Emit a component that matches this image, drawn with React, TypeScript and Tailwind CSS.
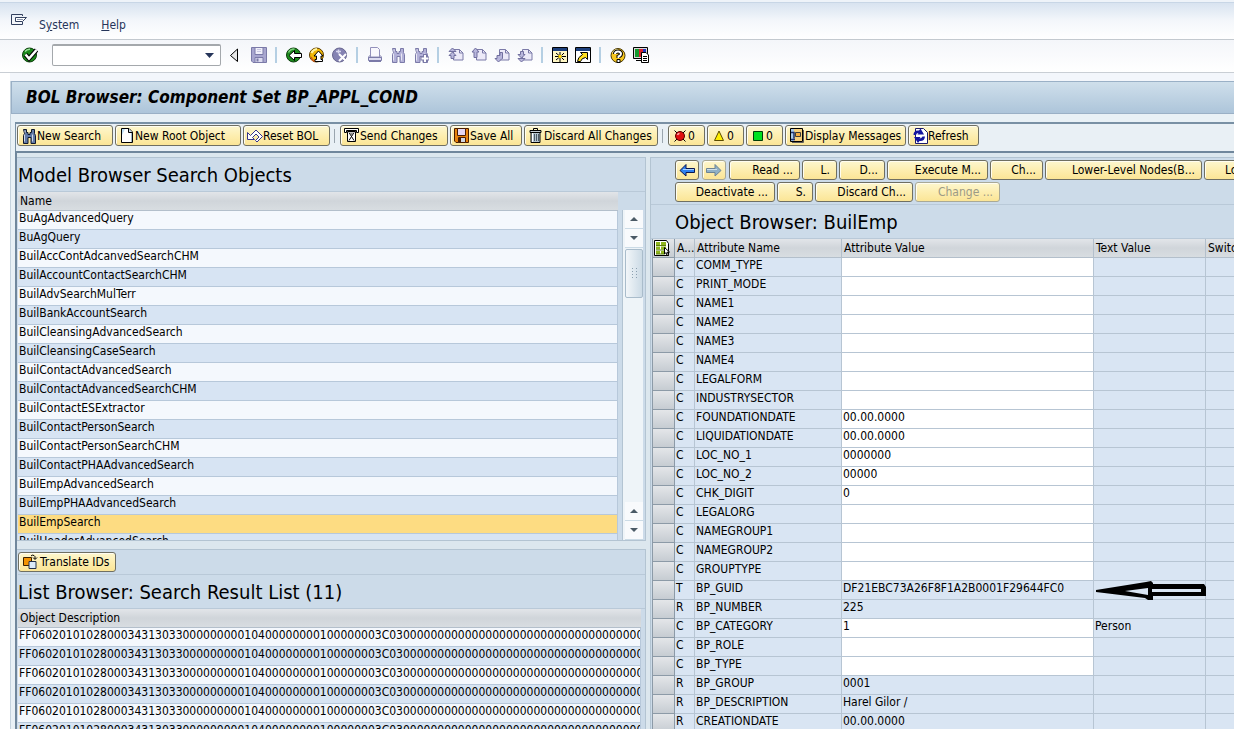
import type { ReactNode } from 'react';

const searchObjects = [
    'BuAgAdvancedQuery',
    'BuAgQuery',
    'BuilAccContAdcanvedSearchCHM',
    'BuilAccountContactSearchCHM',
    'BuilAdvSearchMulTerr',
    'BuilBankAccountSearch',
    'BuilCleansingAdvancedSearch',
    'BuilCleansingCaseSearch',
    'BuilContactAdvancedSearch',
    'BuilContactAdvancedSearchCHM',
    'BuilContactESExtractor',
    'BuilContactPersonSearch',
    'BuilContactPersonSearchCHM',
    'BuilContactPHAAdvancedSearch',
    'BuilEmpAdvancedSearch',
    'BuilEmpPHAAdvancedSearch',
    'BuilEmpSearch',
    'BuilHeaderAdvancedSearch',
];

const resultKey = 'FF060201010280003431303300000000010400000000100000003C03' + '0'.repeat(35);
const results = Array.from({ length: 11 }, () => resultKey);

type Attribute = { kind: 'C' | 'R' | 'T'; name: string; value?: string; text?: string };

const attributes: Attribute[] = [
    { kind: 'C', name: 'COMM_TYPE' },
    { kind: 'C', name: 'PRINT_MODE' },
    { kind: 'C', name: 'NAME1' },
    { kind: 'C', name: 'NAME2' },
    { kind: 'C', name: 'NAME3' },
    { kind: 'C', name: 'NAME4' },
    { kind: 'C', name: 'LEGALFORM' },
    { kind: 'C', name: 'INDUSTRYSECTOR' },
    { kind: 'C', name: 'FOUNDATIONDATE', value: '00.00.0000' },
    { kind: 'C', name: 'LIQUIDATIONDATE', value: '00.00.0000' },
    { kind: 'C', name: 'LOC_NO_1', value: '0000000' },
    { kind: 'C', name: 'LOC_NO_2', value: '00000' },
    { kind: 'C', name: 'CHK_DIGIT', value: '0' },
    { kind: 'C', name: 'LEGALORG' },
    { kind: 'C', name: 'NAMEGROUP1' },
    { kind: 'C', name: 'NAMEGROUP2' },
    { kind: 'C', name: 'GROUPTYPE' },
    { kind: 'T', name: 'BP_GUID', value: 'DF21EBC73A26F8F1A2B0001F29644FC0' },
    { kind: 'R', name: 'BP_NUMBER', value: '225' },
    { kind: 'C', name: 'BP_CATEGORY', value: '1', text: 'Person' },
    { kind: 'C', name: 'BP_ROLE' },
    { kind: 'C', name: 'BP_TYPE' },
    { kind: 'R', name: 'BP_GROUP', value: '0001' },
    { kind: 'R', name: 'BP_DESCRIPTION', value: 'Harel Gilor /' },
    { kind: 'R', name: 'CREATIONDATE', value: '00.00.0000' },
];

/* ---------- icons ---------- */

const Icon = ({ children }: { children: ReactNode }) => (
    <svg className="block size-4 shrink-0" viewBox="0 0 16 16" fill="none" aria-hidden="true">
        {children}
    </svg>
);

const MenuIcon = () => (
    <Icon>
        <path d="M11.5 3V1.5H.5v10h11V9" stroke="#33415f" />
        <path d="M4.5 4.500h11l-4 4h-7z" fill="#fff" stroke="#33415f" />
        <path d="M6 6.500h6" stroke="#8a96ac" />
    </Icon>
);

const CheckIcon = () => (
    <Icon>
        <circle cx="7.5" cy="8" r="7" fill="#1c8a1c" stroke="#0b3d0b" />
        <path d="M3 4.5Q5 2 8 2.2" stroke="#9be09b" strokeWidth="1.5" />
        <path d="M3.5 7.5L7 11.5L14.5 3" stroke="#000" strokeWidth="4.5" />
        <path d="M3.5 7.5L7 11.5L14.5 3" stroke="#fff" strokeWidth="2.5" />
    </Icon>
);

const SaveMutedIcon = () => (
    <Icon>
        <path d="M.5.5h15v15H2L.5 14z" fill="#a8a6cf" stroke="#7b7aa8" />
        <path d="M4 .5h8v7H4z" fill="#f0effa" stroke="#7b7aa8" />
        <path d="M6 2.5h4M6 4.5h4" stroke="#c9c8e2" />
        <path d="M4 10.5h8v5H4z" fill="#dddcf0" stroke="#7b7aa8" />
        <path d="M5.5 11.5h2v3h-2z" fill="#7b7aa8" />
    </Icon>
);

const BackIcon = () => (
    <Icon>
        <circle cx="7.5" cy="8" r="7" fill="#1c8a1c" stroke="#0b3d0b" />
        <path d="M2.500 5.500Q4 2 8.500 2" stroke="#7fd07f" strokeWidth="1.5" />
        <path d="M3 8.5L8.500 3.500V6.500H15.500V10.500H8.500V13.500z" fill="#fff" stroke="#000" />
    </Icon>
);

const ExitIcon = () => (
    <Icon>
        <circle cx="7.5" cy="8" r="7" fill="#f2b705" stroke="#5c3d00" />
        <path d="M2.500 6Q4 2.500 8 2" stroke="#fff3a0" strokeWidth="2" />
        <path d="M2 10Q3 13.500 6 14.500" stroke="#d2601a" strokeWidth="1.5" />
        <path d="M9.500 4L14 9H12V12.500H13.500V14.500H6V12.500H7.500V9H5z" fill="#fff" stroke="#000" />
    </Icon>
);

const CancelIcon = () => (
    <Icon>
        <circle cx="7.5" cy="8" r="7" fill="#8583b3" stroke="#67658f" />
        <path d="M4 4.500h5M6.500 2.500v4" stroke="#d9d8ee" strokeWidth="1.5" />
        <path d="M7 7l7 7M14 7l-7 7" stroke="#fff" strokeWidth="2" />
    </Icon>
);

const PrintIcon = () => (
    <Icon>
        <path d="M3.5 10V.5h7l2 2V10z" fill="#f8f7fd" stroke="#9290bb" />
        <path d="M2.5 8.500L1.500 10.500H14.500L13.500 8.500" stroke="#7b7aa8" />
        <path d="M1.5 10.500h13v3h-13z" fill="#dcdbf0" stroke="#7b7aa8" />
        <path d="M2 14.500h12" stroke="#7b7aa8" />
    </Icon>
);

const Binoculars = ({ fill, line, plus }: { fill: string; line: string; plus?: boolean }) => (
    <Icon>
        <path d="M2.5 1.5h3v3h1.500v2h2v-2h1.500v-3h3v4l1 2v8h-4.500v-6h-3v6h-4.500v-8l1-2z" fill={fill} stroke={line} />
        <path d="M3.5 6.500v7M11.500 6.500v7M4 2.500v2" stroke="#fff" opacity=".7" />
        {plus && <path d="M12 7v9M7.5 11.500h8.500" stroke={line} strokeWidth="4" />}
        {plus && <path d="M12 8v7M8.5 11.500h7" stroke="#fff" strokeWidth="2" />}
    </Icon>
);

const PageIcon = ({ arrow }: { arrow: string }) => (
    <Icon>
        <path d="M5.5 2.5h6l3.500 3.500v7h-9.500z" fill="#eceaf8" stroke="#7b7aa8" />
        <path d="M11.500 2.5v3.500h3.500" stroke="#7b7aa8" />
        <path d={arrow} fill="#b9b7dc" stroke="#716f9f" />
    </Icon>
);

const firstPage = 'M4.500 1L8 4.500H1zM4.500 5L8 8.500H6V11.500H3V8.500H1z';
const prevPage = 'M4.500 1L8 5H6V10.500H3V5H1z';
const nextPage = 'M4.500 15L1 11.500H3V8.500H6V5.500H8.500V11.500H8z';
const lastPage = 'M4.500 15L1 11.500H8zM4.500 11L1 7.500H3.500V4.500H6.500V7.500H8z';

const NewSessionIcon = () => (
    <Icon>
        <path d="M.5.5h15v15H.5z" fill="#fff7c4" stroke="#000" />
        <path d="M1 1h14v3H1z" fill="#1c3f7c" />
        <path d="M8 5v3M8 11v4M3 9.500h4M9.500 9.500H14M4 6l3 2.500M12 6L9.500 8.500M4 13l3-2.500M12 13l-2.500-2.500" stroke="#000" />
        <path d="M6.5 8h3v3h-3z" fill="#ffd800" />
    </Icon>
);

const ShortcutIcon = () => (
    <Icon>
        <path d="M.5.5h15v15H.5z" fill="#fff" stroke="#000" />
        <path d="M1 1h14v3H1z" fill="#1c3f7c" />
        <path d="M5.500 5.500H12.500V12.500L10.500 10.500Q6.500 11 5.500 14.500H2.500Q2.500 10.500 7.500 7.500z" fill="#ffdf20" stroke="#000" />
    </Icon>
);

const HelpIcon = () => (
    <Icon>
        <circle cx="8" cy="8.5" r="7" fill="#f7c61e" stroke="#4b3a08" />
        <path d="M3 6Q5 3 8 3" stroke="#fff6b5" strokeWidth="2" />
        <path d="M5 7Q5 4.500 8 4.500T11 7Q11 8.500 8.500 9.500V11" stroke="#000" strokeWidth="4" />
        <path d="M5 7Q5 4.500 8 4.500T11 7Q11 8.500 8.500 9.500V11" stroke="#fff" strokeWidth="2" />
        <path d="M7 12.500h3v3H7z" fill="#fff" stroke="#000" />
    </Icon>
);

const LayoutIcon = () => (
    <Icon>
        <path d="M.5.5h14v11H.5zM3 13.500h6" fill="#d9d9d9" stroke="#000" />
        <path d="M2 2h4v8H2z" fill="#149a2e" />
        <path d="M6 2h4v8H6z" fill="#d8202a" />
        <path d="M10 2h3v8h-3z" fill="#2036c0" />
        <path d="M8.500 5.500h4.500l2.500 2.500v7.500h-7z" fill="#fff" stroke="#000" />
        <path d="M10 9.500h4M10 11.500h4M10 13.500h4" stroke="#000" />
    </Icon>
);

const DocumentIcon = () => (
    <Icon>
        <path d="M2.5.5h7.500l3.500 3.500v10.500h-11z" fill="#fff" stroke="#000" />
        <path d="M3 1h3L3 7z" fill="#bfe0f5" />
        <path d="M9.500.5v4h4" fill="#c5d8e8" stroke="#000" />
        <path d="M12.500 5v9" stroke="#9db4c8" />
    </Icon>
);

const ResetIcon = () => (
    <Icon>
        <path d="M.5 4.500V11.500H7.500L5.500 9.500L9 6L12 9L8.500 12.500L10 14L15.500 8.500L9 2L3.500 7.500z" fill="#fff" stroke="#33338c" />
    </Icon>
);

const SendIcon = () => (
    <Icon>
        <path d="M.5.5h14v4h-2v-2h-10v2h-2z" fill="#fff" stroke="#000" />
        <path d="M3.5 3.500v10h8v-10z" fill="#fff" stroke="#000" />
        <path d="M5 4.500l5 8M10 4.500l-5 8" stroke="#000" />
        <path d="M5.5 4.500h4L7.500 7.500z" fill="#8a8a8a" />
    </Icon>
);

const FloppyIcon = () => (
    <Icon>
        <path d="M.5.5h14v14H2L.5 13z" fill="#e8820c" stroke="#4a1c00" />
        <path d="M3.500.5h8v7h-8z" fill="#e5d6f2" stroke="#4a1c00" />
        <path d="M4.500 9.500h7v5h-7z" fill="#cfd6e2" stroke="#4a1c00" />
        <path d="M5 10h2v4H5z" fill="#4a1c00" />
    </Icon>
);

const TrashIcon = () => (
    <Icon>
        <path d="M5.500 2V.5h4V2" stroke="#000" />
        <path d="M2 2.500h11v2H2z" fill="#c5ced6" stroke="#000" />
        <path d="M3 4.500h9v10H3z" fill="#b4c4d0" stroke="#000" />
        <path d="M6.500 6v7M8.500 6v7M10.500 6v7" stroke="#4c5a66" />
        <path d="M4.500 5v9" stroke="#fff" />
    </Icon>
);

const RedLight = () => (
    <Icon>
        <path d="M2.500 2.500l3 3M13.500 2.500l-3 3M2.500 13.500l3-3M13.500 13.500l-3-3" stroke="#000" />
        <circle cx="8" cy="8" r="4.5" fill="#e01010" stroke="#5a0000" />
        <path d="M5.500 7Q6 5.500 7.500 5.500" stroke="#ffb0b0" strokeWidth="1.5" />
    </Icon>
);

const YellowLight = () => (
    <Icon>
        <path d="M8 3L12.500 12.500H3.500z" fill="#ffee00" stroke="#5a4a00" />
    </Icon>
);

const GreenLight = () => (
    <Icon>
        <path d="M3.5 3.5h9v9h-9z" fill="#00e020" stroke="#003c08" />
    </Icon>
);

const MessagesIcon = () => (
    <Icon>
        <path d="M1.500.5h12v13h-12z" fill="#f6cf7c" stroke="#000" />
        <path d="M2 1h3v12H2z" fill="#a9c8ec" />
        <path d="M6.500 4.500h5v4h-5z" fill="#f3a93f" stroke="#3b3b3b" />
        <path d="M2 4.500h3v6M2 11.500h4" stroke="#1d2f6e" strokeWidth="1.5" />
        <path d="M3 14.500h11.500V2" stroke="#5c5c5c" />
    </Icon>
);

const RefreshIcon = () => (
    <Icon>
        <path d="M3.5.5h8l4 4v11h-12z" fill="#fff" stroke="#1a1a6a" />
        <path d="M1.500 7Q1.500 2 7 2.500L8.500.5L12 6.500H5.500L6.500 5Q4.500 5 4 7z" fill="#1414a0" />
        <path d="M13 8.500Q12.500 13.500 7.500 13L6 15L2 9H8.500L7.500 10.500Q9.500 10.500 10.500 8.500z" fill="#1414a0" />
    </Icon>
);

const ArrowIcon = ({ right }: { right?: boolean }) => (
    <Icon>
        <path
            d={right ? 'M.5 6.500H9V2.500L15 8.500L9 14V10.500H.5z' : 'M15.500 6.500H7V2.500L1 8.500L7 14V10.500H15.500z'}
            fill={right ? '#8fb0c6' : '#2f80f0'}
            stroke={right ? '#6d8494' : '#0b1650'}
        />
        <path d={right ? 'M1 7.500h10' : 'M4 7.500h11'} stroke={right ? '#cfe0ea' : '#a9d4ff'} />
    </Icon>
);

const TranslateIcon = () => (
    <Icon>
        <path d="M1.500 3.500h8v8h-8z" fill="#f39200" stroke="#3a1f00" />
        <path d="M7 7.500h7v7H7z" fill="#dcebf8" stroke="#22304a" />
        <path d="M9 2Q10 .5 12 1.500Q13.500 2 13 5M11 3.500L13 5.500L15 3.500" stroke="#000" />
    </Icon>
);

const ConfigIcon = () => (
    <Icon>
        <path d="M.5.5h12l2 3v12H.5z" fill="#fff" stroke="#000" />
        <path d="M2 2h4v3H2zM7 2h5v3H7zM2 6.500h4v3H2zM7 6.500h5v3H7zM2 11h4v3H2zM7 11h4v3H7z" fill="#8fb51c" />
        <path d="M2 5.500h10M2 10h9M2 14h9" stroke="#5c7d0c" />
        <path d="M10.500 7.500V14L12 12.500L13 15.500H14.500L13.500 12H15.500z" fill="#fff" stroke="#000" />
    </Icon>
);

/* ---------- small parts ---------- */

const BarDivider = () => <span className="ml-px mr-0.5 h-4 w-0.5 bg-[#b5cfe3]" />;

const ToolButton = ({ label, children }: { label: string; children: ReactNode }) => (
    <button type="button" aria-label={label} className="flex size-4 items-center justify-center">
        {children}
    </button>
);

const buttonLook =
    'flex shrink-0 items-center overflow-hidden whitespace-nowrap rounded-[3px] border border-[#6f6f62] bg-linear-to-b from-[#fdf7cf] via-[#fdeeb0] to-[#fbe596] shadow-[inset_1px_1px_0_#fffdf0]';

const AppButton = ({ width, icon, children }: { width: string; icon?: ReactNode; children: ReactNode }) => (
    <button type="button" className={`${buttonLook} h-[21px] pl-[3px] ${width}`}>
        {icon}
        <span>{children}</span>
    </button>
);

const TextButton = ({ width, disabled, children }: { width: string; disabled?: boolean; children: ReactNode }) => (
    <button
        type="button"
        disabled={disabled}
        className={`${buttonLook} h-5 justify-end pr-1.5 disabled:border-[#a9a996] disabled:text-[#9c9a86] ${width}`}
    >
        {children}
    </button>
);

const GroupDivider = () => <span className="ml-0.5 mr-[3px] h-3.5 w-px bg-[#9aa5ae]" />;

const ScrollArrow = ({ down }: { down?: boolean }) => (
    <button
        type="button"
        aria-label={down ? 'Scroll down' : 'Scroll up'}
        className="flex h-[19px] w-full shrink-0 items-center justify-center border-b border-[#cbdbe6] bg-[#f8fafc]"
    >
        <svg className="h-1 w-2" viewBox="0 0 8 4" aria-hidden="true">
            <path d={down ? 'M0 0h8L4 4z' : 'M0 4h8L4 0z'} fill="#4a5a66" />
        </svg>
    </button>
);

const panel = 'flex min-h-0 min-w-0 flex-col overflow-hidden border-t border-[#b3c4d2] bg-[#ccdbe9]';
const headCell =
    'border-b border-[#b3bfcb] bg-linear-to-b from-[#e2e5e9] via-[#d0d5da] to-[#d8dde1] px-0.5 py-0 text-left font-normal';
const heading = 'shrink-0 border-b border-[#b9c9d8] pt-0.5 text-[20px] leading-[31px]';
const listCell = 'h-[19px] overflow-hidden whitespace-nowrap border-b border-r border-[#b7c8da] p-0 pb-1 pl-px leading-[14px]';

/* ---------- bars ---------- */

const MenuBar = () => (
    <nav className="flex h-[37px] shrink-0 items-center border-b border-[#c3c9cf] bg-linear-to-b from-[#d8e3f0] via-[#f4f7fb] to-white pl-[11px] pt-2 text-[#26355a]">
        <button type="button" aria-label="Menu" className="mb-2 mr-3">
            <MenuIcon />
        </button>
        <a href="#system" className="mr-[22px]">
            S<u>y</u>stem
        </a>
        <a href="#help">
            <u>H</u>elp
        </a>
    </nav>
);

const StandardToolbar = () => (
    <div className="flex h-[33px] shrink-0 items-center gap-[7px] border-b border-[#c9ced4] bg-linear-to-b from-[#f4f6fa] to-white pb-0.5 pl-[22px]">
        <ToolButton label="Enter"><CheckIcon /></ToolButton>
        <label className="ml-[7px] flex h-[22px] w-[169px] items-center rounded-xs border border-t-2 border-[#a4a8ac] bg-white pr-1.5">
            <input aria-label="Command" className="min-w-0 flex-1 px-1 outline-none" />
            <svg className="h-[5px] w-[9px]" viewBox="0 0 9 5" aria-hidden="true">
                <path d="M0 0h9L4.5 5z" fill="#26355a" />
            </svg>
        </label>
        <ToolButton label="Collapse">
            <Icon>
                <path d="M9.5 2v12.500L2.5 8.500z" fill="#e8e8e8" stroke="#000" />
            </Icon>
        </ToolButton>
        <ToolButton label="Save"><SaveMutedIcon /></ToolButton>
        <BarDivider />
        <ToolButton label="Back"><BackIcon /></ToolButton>
        <ToolButton label="Exit"><ExitIcon /></ToolButton>
        <ToolButton label="Cancel"><CancelIcon /></ToolButton>
        <BarDivider />
        <ToolButton label="Print"><PrintIcon /></ToolButton>
        <ToolButton label="Find"><Binoculars fill="#b3b1d8" line="#7b7aa8" /></ToolButton>
        <ToolButton label="Find next"><Binoculars fill="#b3b1d8" line="#7b7aa8" plus /></ToolButton>
        <BarDivider />
        <ToolButton label="First page"><PageIcon arrow={firstPage} /></ToolButton>
        <ToolButton label="Previous page"><PageIcon arrow={prevPage} /></ToolButton>
        <ToolButton label="Next page"><PageIcon arrow={nextPage} /></ToolButton>
        <ToolButton label="Last page"><PageIcon arrow={lastPage} /></ToolButton>
        <BarDivider />
        <ToolButton label="New session"><NewSessionIcon /></ToolButton>
        <ToolButton label="Create shortcut"><ShortcutIcon /></ToolButton>
        <BarDivider />
        <ToolButton label="Help"><HelpIcon /></ToolButton>
        <ToolButton label="Customize layout"><LayoutIcon /></ToolButton>
    </div>
);

const ApplicationToolbar = () => (
    <div className="ml-1 flex h-[29px] shrink-0 items-center gap-0.5 border-l border-t-2 border-[#7990a4] bg-[#e9f0f5] pb-1 pl-px">
        <AppButton width="w-24" icon={<Binoculars fill="#5f79a8" line="#10182c" />}>New Search</AppButton>
        <AppButton width="w-[126px]" icon={<DocumentIcon />}>New Root Object</AppButton>
        <AppButton width="w-[87px]" icon={<ResetIcon />}>Reset BOL</AppButton>
        <GroupDivider />
        <AppButton width="w-[108px]" icon={<SendIcon />}>Send Changes</AppButton>
        <AppButton width="w-[72px]" icon={<FloppyIcon />}>Save All</AppButton>
        <AppButton width="w-[134px]" icon={<TrashIcon />}>Discard All Changes</AppButton>
        <GroupDivider />
        <AppButton width="w-[37px]" icon={<RedLight />}>0</AppButton>
        <AppButton width="w-[37px]" icon={<YellowLight />}>0</AppButton>
        <AppButton width="w-[37px]" icon={<GreenLight />}>0</AppButton>
        <AppButton width="w-[121px]" icon={<MessagesIcon />}>Display Messages</AppButton>
        <AppButton width="w-[71px]" icon={<RefreshIcon />}>Refresh</AppButton>
    </div>
);

/* ---------- panels ---------- */

const SearchObjects = () => (
    <section className={`${panel} shrink-0 border-b border-r pl-px`}>
        <h2 className={heading}>Model Browser Search Objects</h2>
        <div className="flex h-[348px] gap-1 pr-0.5">
            <div className="min-w-0 flex-1 overflow-hidden">
                <table className="w-full table-fixed border-separate border-spacing-0">
                    <thead>
                        <tr>
                            <th className={`${headCell} h-[19px]`}>Name</th>
                        </tr>
                    </thead>
                    <tbody>
                        {searchObjects.map((name) => (
                            <tr
                                key={name}
                                className={
                                    name === 'BuilEmpSearch'
                                        ? 'bg-[#fddc82]'
                                        : 'odd:bg-[#f4f8fd] even:bg-[#d7e4f3]'
                                }
                            >
                                <td className={listCell}>{name}</td>
                            </tr>
                        ))}
                    </tbody>
                </table>
            </div>
            <div className="mt-[18px] flex w-[21px] flex-col border-l border-[#b3c4d2] bg-[#eef4f8] pl-0.5">
                <ScrollArrow />
                <ScrollArrow down />
                <div className="flex-1">
                    <div className="mt-px flex h-[49px] items-center justify-center rounded-xs border border-[#a9bccb] bg-linear-to-r from-[#f2f6f9] to-[#ccdbe6]">
                        <svg className="h-[11px] w-[5px]" viewBox="0 0 5 11" aria-hidden="true">
                            <path d="M.5 0v11M4.5 0v11" stroke="#8ba0b0" strokeDasharray="1 2" />
                        </svg>
                    </div>
                </div>
                <ScrollArrow />
                <ScrollArrow down />
            </div>
        </div>
    </section>
);

const ResultList = () => (
    <section className={`${panel} flex-1 border-r pl-px`}>
        <div className="flex h-[25px] shrink-0 items-center border-b border-[#b9c9d8]">
            <button type="button" className={`${buttonLook} h-5 w-[98px] gap-0.5 pl-[3px]`}>
                <TranslateIcon />
                <span>Translate IDs</span>
            </button>
        </div>
        <h2 className={heading}>List Browser: Search Result List (11)</h2>
        <div className="overflow-hidden pr-1">
            <table className="w-full table-fixed border-separate border-spacing-0">
                <thead>
                    <tr>
                        <th className={`${headCell} h-[19px]`}>Object Description</th>
                    </tr>
                </thead>
                <tbody>
                    {results.map((key, i) => (
                        <tr key={i} className="odd:bg-[#f4f8fd] even:bg-[#d7e4f3]">
                            <td className={listCell}>{key}</td>
                        </tr>
                    ))}
                </tbody>
            </table>
        </div>
    </section>
);

const PointerArrow = () => (
    <svg className="absolute left-px top-0 z-10 h-5 w-28" viewBox="0 0 112 20" aria-hidden="true">
        <path
            fillRule="evenodd"
            d="M1 9L51 1L56 0L58 2V3H109L111 6V15H58V19H53L50 17L1 11zM30 10L53 14V7zM57 8V11H106V8z"
        />
    </svg>
);

const cell = 'h-[19px] border-b border-r border-[#b7c5d3] p-0 pb-1 pl-px leading-[14px]';
const selector =
    'border-x border-b border-[#8c9aa7] bg-linear-to-b from-[#e4e6e9] to-[#c6ccd2] p-0';

const ObjectBrowser = () => (
    <section className={`${panel} border-l`}>
        <div className="flex h-[47px] shrink-0 flex-col justify-center gap-0.5 border-b border-[#b9c9d8] pl-6">
            <div className="flex gap-0.5">
                <button type="button" aria-label="Back" className={`${buttonLook} mr-px h-5 w-6 justify-center`}>
                    <ArrowIcon />
                </button>
                <button type="button" aria-label="Forward" disabled className={`${buttonLook} mr-px h-5 w-6 justify-center disabled:border-[#a9a996]`}>
                    <ArrowIcon right />
                </button>
                <TextButton width="w-[71px]">Read ...</TextButton>
                <TextButton width="w-[35px]">L.</TextButton>
                <TextButton width="w-[46px]">D...</TextButton>
                <TextButton width="w-[101px]">Execute M...</TextButton>
                <TextButton width="w-[53px]">Ch...</TextButton>
                <TextButton width="w-[157px]">Lower-Level Nodes(B...</TextButton>
                <button type="button" className={`${buttonLook} h-5 w-[157px] pl-5`}>Lower-Level Nodes</button>
            </div>
            <div className="flex gap-0.5">
                <TextButton width="w-[100px]">Deactivate ...</TextButton>
                <TextButton width="w-9">S.</TextButton>
                <TextButton width="w-[98px]">Discard Ch...</TextButton>
                <TextButton width="w-[85px]" disabled>Change ...</TextButton>
            </div>
        </div>
        <h2 className={`${heading} pl-6`}>Object Browser: BuilEmp</h2>
        <div className="min-h-0 overflow-hidden pl-px">
            <table className="w-[760px] table-fixed border-separate border-spacing-0">
                <colgroup>
                    <col className="w-[23px]" />
                    <col className="w-5" />
                    <col className="w-[147px]" />
                    <col className="w-[252px]" />
                    <col className="w-28" />
                    <col />
                </colgroup>
                <thead>
                    <tr>
                        <th aria-label="Table settings" className={`${selector} h-[19px] pl-px`}><ConfigIcon /></th>
                        <th className={`${headCell} whitespace-nowrap border-r`}>A...</th>
                        <th className={`${headCell} border-r`}>Attribute Name</th>
                        <th className={`${headCell} border-r`}>Attribute Value</th>
                        <th className={`${headCell} border-r`}>Text Value</th>
                        <th className={headCell}>Switch</th>
                    </tr>
                </thead>
                <tbody>
                    {attributes.map(({ kind, name, value, text }) => (
                        <tr key={name} className="bg-[#d9e5f3]">
                            <td className={selector} />
                            <td className={cell}>{kind}</td>
                            <td className={cell}>{name}</td>
                            {kind === 'C' ? (
                                <td className={`${cell} bg-white`}>
                                    <input
                                        aria-label={name}
                                        defaultValue={value}
                                        className="block h-3.5 w-full bg-transparent leading-[14px] outline-none"
                                    />
                                </td>
                            ) : (
                                <td className={cell}>{value}</td>
                            )}
                            <td className={`${cell} relative`}>
                                {text}
                                {name === 'BP_GUID' && <PointerArrow />}
                            </td>
                            <td className={cell} />
                        </tr>
                    ))}
                </tbody>
            </table>
        </div>
    </section>
);

export default function App() {
    return (
        <div className="flex h-screen flex-col overflow-hidden bg-white font-['DejaVu_Sans_Condensed','DejaVu_Sans',sans-serif] text-[12px] leading-4 text-black">
            <div className="h-[3px] shrink-0 border-b border-[#c8d6e6] bg-[#eef3f9]" />
            <MenuBar />
            <StandardToolbar />
            <main className="ml-2.5 flex min-h-0 flex-1 flex-col border-l border-[#c5d3de] bg-[#e9f1f6]">
                <div className="-ml-px h-2 shrink-0 bg-[#f3f6fb]" />
                <h1 className="h-[33px] shrink-0 border border-r-0 border-[#9ab0c6] bg-linear-to-b from-[#cfdfeb] to-[#adc5da] pl-3.5 text-[17px] font-bold italic leading-[31px]">
                    BOL Browser: Component Set BP_APPL_COND
                </h1>
                <div className="h-2 shrink-0" />
                <ApplicationToolbar />
                <div className="ml-1 grid min-h-0 flex-1 grid-cols-[629fr_584fr] gap-1 border-l-2 border-t-2 border-[#70879c] bg-[#dce7ee] pt-1">
                    <div className="flex min-h-0 min-w-0 flex-col gap-2">
                        <SearchObjects />
                        <ResultList />
                    </div>
                    <ObjectBrowser />
                </div>
            </main>
        </div>
    );
}
